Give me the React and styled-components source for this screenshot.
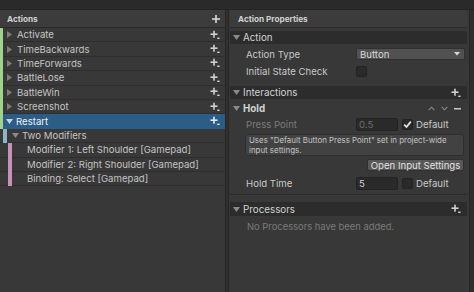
import React from "react";
import styled, { createGlobalStyle } from "styled-components";

const Global = createGlobalStyle`
  html, body { margin: 0; padding: 0; background: #282828; }
  body { font-family: Inter, "Noto Sans", sans-serif; }
`;

const Window = styled.div`
  width: 474px;
  height: 292px;
  overflow: hidden;
  background: #282828;
  display: flex;
  flex-direction: column;
`;

const TopStrip = styled.div`
  height: 10px;
  flex: none;
  background: #2a2a2a;
  border-bottom: 1px solid #232323;
  box-sizing: border-box;
`;

const Body = styled.div`
  flex: 1;
  display: flex;
  min-height: 0;
`;

const LeftPane = styled.div`
  width: 225px;
  flex: none;
  background: #383838;
  display: flex;
  flex-direction: column;
`;

const Splitter = styled.div`
  width: 4px;
  flex: none;
  background: #303030;
  border-left: 1px solid #262626;
  border-right: 1px solid #262626;
  box-sizing: border-box;
`;

const RightPane = styled.div`
  width: 241px;
  flex: none;
  background: #383838;
  display: flex;
  flex-direction: column;
  padding: 0 2px 0 1px;
  box-sizing: border-box;
  border-right: 1px solid #262626;
`;

const RightEdge = styled.div`
  flex: 1;
  background: #2e2e2e;
`;

const PaneHeader = styled.div`
  height: 17px;
  flex: none;
  display: flex;
  align-items: center;
  justify-content: space-between;
  padding: 0 5px 0 ${(p) => p.$pad}px;
  background: #3c3c3c;
  border-bottom: 1px solid #2a2a2a;
  font-size: 8.2px;
  font-weight: 700;
  color: #d0d0d0;
`;

const Row = styled.div`
  position: relative;
  height: 14.4px;
  flex: none;
  box-sizing: border-box;
  display: flex;
  align-items: center;
  padding-left: ${(p) => p.$indent}px;
  padding-right: 5px;
  background: ${(p) => (p.$selected ? "#2c5d87" : "transparent")};
  border-bottom: 1px solid ${(p) => (p.$selected ? "#2c5d87" : "#2e2e2e")};
  color: ${(p) => (p.$selected ? "#f0f0f0" : "#c4c4c4")};
  font-size: 9.6px;
  white-space: nowrap;
`;

const Bar = styled.div`
  position: absolute;
  left: ${(p) => p.$left}px;
  top: 0;
  bottom: -1px;
  width: ${(p) => p.$w}px;
  background: ${(p) => p.$color};
`;

const Arrow = styled.span`
  width: 10px;
  flex: none;
  display: flex;
  align-items: center;
`;

const RowText = styled.span`
  flex: 1;
`;

const PlusWrap = styled.span`
  display: flex;
  align-items: center;
  flex: none;
`;

const Section = styled.div`
  display: flex;
  flex-direction: column;
`;

const Foldout = styled.div`
  height: ${(p) => p.$h || 13}px;
  margin-top: ${(p) => p.$mt || 0}px;
  flex: none;
  display: flex;
  align-items: center;
  padding: 0 6px 0 3px;
  background: ${(p) => (p.$plain ? "transparent" : "#2c2c2c")};
  color: #d2d2d2;
  font-size: 9.8px;
  font-weight: ${(p) => (p.$bold ? 700 : 400)};
`;

const FoldTitle = styled.span`
  flex: 1;
  margin-left: 3px;
`;

const PropRow = styled.div`
  height: ${(p) => p.$h || 14}px;
  margin-top: ${(p) => p.$mt || 0}px;
  flex: none;
  display: flex;
  align-items: center;
  padding-left: 16px;
  font-size: 9.6px;
  color: ${(p) => (p.$disabled ? "#7b7b7b" : "#c8c8c8")};
`;

const Label = styled.span`
  width: 110px;
  flex: none;
`;

const Dropdown = styled.div`
  width: 109px;
  height: 12px;
  box-sizing: border-box;
  background: #515151;
  border: 1px solid #303030;
  border-radius: 2px;
  display: flex;
  align-items: center;
  justify-content: space-between;
  padding: 0 4px 0 3px;
  color: #d8d8d8;
  font-size: 9.6px;
`;

const Box = styled.div`
  width: 11px;
  height: 11px;
  box-sizing: border-box;
  background: #2a2a2a;
  border: 1px solid #222;
  border-radius: 2px;
  display: flex;
  align-items: center;
  justify-content: center;
  flex: none;
`;

const Field = styled.div`
  width: 42px;
  height: 13px;
  box-sizing: border-box;
  background: #2a2a2a;
  border: 1px solid #232323;
  border-radius: 2px;
  display: flex;
  align-items: center;
  padding-left: 2px;
  color: ${(p) => (p.$disabled ? "#6f6f6f" : "#d2d2d2")};
  font-size: 9.6px;
  flex: none;
`;

const DefaultLabel = styled.span`
  margin-left: 3px;
  color: #c8c8c8;
  font-size: 9.6px;
`;

const Check = styled.div`
  margin-left: 4px;
  display: flex;
  align-items: center;
`;

const HelpBox = styled.div`
  margin: 3px 3px 0 15px;
  height: 22px;
  box-sizing: border-box;
  background: #424242;
  border: 1px solid #2f2f2f;
  border-radius: 3px;
  padding: 1px 3px;
  font-size: 7.9px;
  line-height: 9.6px;
  color: #c4c4c4;
`;

const ButtonRow = styled.div`
  display: flex;
  justify-content: flex-end;
  margin: 3px 3px 0 0;
`;

const Btn = styled.div`
  width: 97px;
  height: 12px;
  box-sizing: border-box;
  background: #585858;
  border: 1px solid #303030;
  border-radius: 2px;
  display: flex;
  align-items: center;
  justify-content: center;
  color: #e0e0e0;
  font-size: 9.6px;
  white-space: nowrap;
`;

const Divider = styled.div`
  height: 1px;
  margin-top: 4px;
  background: #2a2a2a;
`;

const Note = styled.div`
  padding-left: 17px;
  margin-top: 4px;
  height: 12px;
  display: flex;
  align-items: center;
  font-size: 9.4px;
  color: #7a7a7a;
`;

const IconGroup = styled.span`
  display: flex;
  align-items: center;
  gap: 6px;
`;

const TriRight = ({ color = "#7d7d7d" }) => (
  <svg width="5" height="7" viewBox="0 0 5 7">
    <polygon points="0,0 5,3.5 0,7" fill={color} />
  </svg>
);

const TriDown = ({ color = "#8a8a8a" }) => (
  <svg width="7" height="5" viewBox="0 0 7 5">
    <polygon points="0,0 7,0 3.5,5" fill={color} />
  </svg>
);

const PlusDrop = ({ color = "#d0d0d0" }) => (
  <svg width="10" height="10" viewBox="0 0 10 10">
    <rect x="0.5" y="3.4" width="7" height="1.6" fill={color} />
    <rect x="3.2" y="0.7" width="1.6" height="7" fill={color} />
    <rect x="7.2" y="7.6" width="2.4" height="1.4" fill={color} />
  </svg>
);

const Plus = ({ color = "#d6d6d6" }) => (
  <svg width="8" height="8" viewBox="0 0 8 8">
    <rect x="0" y="3.2" width="8" height="1.6" fill={color} />
    <rect x="3.2" y="0" width="1.6" height="8" fill={color} />
  </svg>
);

const CheckMark = () => (
  <svg width="9" height="9" viewBox="0 0 9 9">
    <polyline points="1.2,4.6 3.5,7 7.8,1.6" fill="none" stroke="#e8e8e8" strokeWidth="1.7" />
  </svg>
);

const Chevron = ({ up }) => (
  <svg width="7" height="5" viewBox="0 0 7 5">
    <polyline points={up ? "0.7,4.2 3.5,1.2 6.3,4.2" : "0.7,0.8 3.5,3.8 6.3,0.8"} fill="none" stroke="#8a8a8a" strokeWidth="1.1" />
  </svg>
);

const Minus = () => (
  <svg width="7" height="5" viewBox="0 0 7 5">
    <rect x="0" y="2" width="7" height="1.5" fill="#c8c8c8" />
  </svg>
);

const DropArrow = () => (
  <svg width="6" height="4" viewBox="0 0 6 4">
    <polygon points="0,0 6,0 3,3.6" fill="#d8d8d8" />
  </svg>
);

const actions = ["Activate", "TimeBackwards", "TimeForwards", "BattleLose", "BattleWin", "Screenshot"];

const bindings = [
  "Modifier 1: Left Shoulder [Gamepad]",
  "Modifier 2: Right Shoulder [Gamepad]",
  "Binding: Select [Gamepad]",
];

export default function App() {
  return (
    <Window>
      <Global />
      <TopStrip />
      <Body>
        <LeftPane>
          <PaneHeader $pad={7}>
            <span>Actions</span>
            <Plus />
          </PaneHeader>
          {actions.map((a) => (
            <Row key={a} $indent={7}>
              <Bar $left={0} $w={3} $color="#9fd38a" />
              <Arrow><TriRight /></Arrow>
              <RowText>{a}</RowText>
              <PlusWrap><PlusDrop /></PlusWrap>
            </Row>
          ))}
          <Row $indent={6} $selected>
            <Bar $left={0} $w={3} $color="#9fd38a" />
            <Arrow><TriDown color="#c8d4e0" /></Arrow>
            <RowText>Restart</RowText>
            <PlusWrap><PlusDrop color="#e8e8e8" /></PlusWrap>
          </Row>
          <Row $indent={12}>
            <Bar $left={3} $w={4} $color="#8ab6c8" />
            <Arrow><TriDown /></Arrow>
            <RowText>Two Modifiers</RowText>
          </Row>
          {bindings.map((b) => (
            <Row key={b} $indent={27}>
              <Bar $left={8} $w={4} $color="#c792b9" />
              <RowText>{b}</RowText>
            </Row>
          ))}
        </LeftPane>
        <Splitter />
        <RightPane>
          <PaneHeader $pad={8}>
            <span>Action Properties</span>
          </PaneHeader>
          <Section>
            <Foldout $mt={3}>
              <TriDown />
              <FoldTitle>Action</FoldTitle>
            </Foldout>
            <PropRow $mt={3} $h={14}>
              <Label>Action Type</Label>
              <Dropdown>
                <span>Button</span>
                <DropArrow />
              </Dropdown>
            </PropRow>
            <PropRow $mt={3} $h={14}>
              <Label>Initial State Check</Label>
              <Box />
            </PropRow>
            <Foldout $mt={8} $h={13}>
              <TriDown />
              <FoldTitle>Interactions</FoldTitle>
              <PlusDrop />
            </Foldout>
            <Foldout $mt={3} $h={13} $plain $bold>
              <TriDown />
              <FoldTitle>Hold</FoldTitle>
              <IconGroup>
                <Chevron up />
                <Chevron />
                <Minus />
              </IconGroup>
            </Foldout>
            <PropRow $mt={2} $h={14} $disabled>
              <Label>Press Point</Label>
              <Field $disabled>0.5</Field>
              <Check>
                <Box><CheckMark /></Box>
              </Check>
              <DefaultLabel>Default</DefaultLabel>
            </PropRow>
            <HelpBox>
              Uses "Default Button Press Point" set in project-wide input settings.
            </HelpBox>
            <ButtonRow>
              <Btn>Open Input Settings</Btn>
            </ButtonRow>
            <PropRow $mt={5} $h={14}>
              <Label>Hold Time</Label>
              <Field>5</Field>
              <Check>
                <Box />
              </Check>
              <DefaultLabel>Default</DefaultLabel>
            </PropRow>
            <Divider />
            <Foldout $mt={7} $h={14}>
              <TriDown />
              <FoldTitle>Processors</FoldTitle>
              <PlusDrop />
            </Foldout>
            <Note>No Processors have been added.</Note>
          </Section>
        </RightPane>
        <RightEdge />
      </Body>
    </Window>
  );
}
